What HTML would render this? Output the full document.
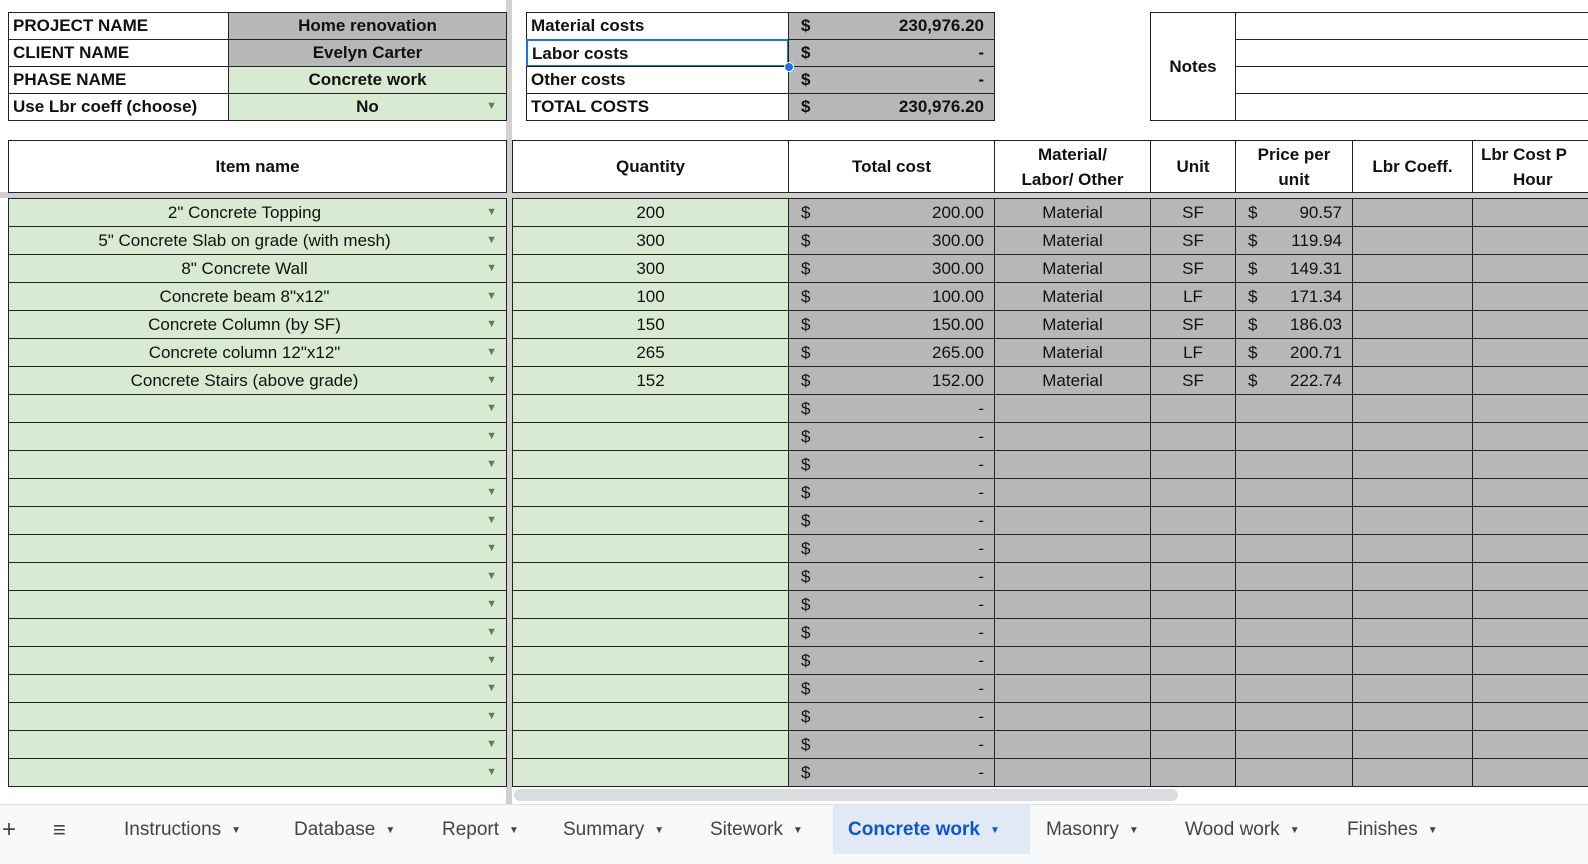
<!DOCTYPE html>
<html><head><meta charset="utf-8"><style>
*{box-sizing:border-box;margin:0;padding:0}
body{width:1588px;height:864px;overflow:hidden;background:#fff;font-family:"Liberation Sans",sans-serif;font-size:17px;color:#111;position:relative}
.c{position:absolute;border:1px solid #222;white-space:nowrap;overflow:hidden;line-height:25px}
.g{background:#d9ead3}.k{background:#b7b7b7}
.b{font-weight:bold}
.ctr{text-align:center}
.r{position:absolute;left:0;width:1588px;height:28px}
.r .c{top:0;height:29px;line-height:27px}
.a{left:8px;width:499px;text-align:center;padding-right:26px}
.q{left:512px;width:277px;text-align:center}
.t{left:788px;width:207px;text-align:right;padding-right:10px}
.m{left:994px;width:157px;text-align:center}
.u{left:1150px;width:86px;text-align:center}
.p{left:1235px;width:118px;text-align:right;padding-right:10px}
.lc{left:1352px;width:121px}
.lh{left:1472px;width:130px}
.d{position:absolute;left:12px}
.dd{position:absolute;right:9px;top:0;color:#5f7f55;font-size:11px}
.tab{position:absolute;top:804px;height:50px;line-height:52px;font-size:19px;color:#444}
.ar{font-size:10px;margin-left:10px;vertical-align:2px}
</style></head><body>
<div style="position:absolute;left:506px;top:0;width:6px;height:804px;background:#d0d0d0"></div>
<div style="position:absolute;left:0;top:192px;width:1588px;height:6px;background:#d0d0d0"></div>
<div class="c b" style="left:8px;top:12px;width:221px;height:28px;padding-left:4px">PROJECT NAME</div>
<div class="c b k ctr" style="left:228px;top:12px;width:279px;height:28px">Home renovation</div>
<div class="c b" style="left:8px;top:39px;width:221px;height:28px;padding-left:4px">CLIENT NAME</div>
<div class="c b k ctr" style="left:228px;top:39px;width:279px;height:28px">Evelyn Carter</div>
<div class="c b" style="left:8px;top:66px;width:221px;height:28px;padding-left:4px">PHASE NAME</div>
<div class="c b g ctr" style="left:228px;top:66px;width:279px;height:28px">Concrete work</div>
<div class="c b" style="left:8px;top:93px;width:221px;height:28px;padding-left:4px">Use Lbr coeff (choose)</div>
<div class="c b g ctr" style="left:228px;top:93px;width:279px;height:28px">No<span class="dd" style="line-height:25px">▼</span></div>
<div class="c b" style="left:526px;top:12px;width:263px;height:28px;padding-left:4px">Material costs</div>
<div class="c b k" style="left:788px;top:12px;width:207px;height:28px;text-align:right;padding-right:10px"><span class="d">$</span>230,976.20</div>
<div class="c b" style="left:526px;top:39px;width:263px;height:28px;padding-left:4px;border:2px solid #1a73e8">Labor costs</div>
<div class="c b k" style="left:788px;top:39px;width:207px;height:28px;text-align:right;padding-right:10px"><span class="d">$</span>-</div>
<div class="c b" style="left:526px;top:66px;width:263px;height:28px;padding-left:4px">Other costs</div>
<div class="c b k" style="left:788px;top:66px;width:207px;height:28px;text-align:right;padding-right:10px"><span class="d">$</span>-</div>
<div class="c b" style="left:526px;top:93px;width:263px;height:28px;padding-left:4px">TOTAL COSTS</div>
<div class="c b k" style="left:788px;top:93px;width:207px;height:28px;text-align:right;padding-right:10px"><span class="d">$</span>230,976.20</div>
<div style="position:absolute;left:784px;top:62px;width:10px;height:10px;border-radius:50%;background:#1a73e8;border:1px solid #fff"></div>
<div class="c b ctr" style="left:1150px;top:12px;width:86px;height:109px;line-height:107px">Notes</div>
<div class="c" style="left:1235px;top:12px;width:360px;height:28px"></div>
<div class="c" style="left:1235px;top:39px;width:360px;height:28px"></div>
<div class="c" style="left:1235px;top:66px;width:360px;height:28px"></div>
<div class="c" style="left:1235px;top:93px;width:360px;height:28px"></div>
<div class="c b ctr" style="left:8px;top:140px;width:499px;height:53px;line-height:51px">Item name</div>
<div class="c b ctr" style="left:512px;top:140px;width:277px;height:53px;line-height:51px">Quantity</div>
<div class="c b ctr" style="left:788px;top:140px;width:207px;height:53px;line-height:51px">Total cost</div>
<div class="c b ctr" style="left:994px;top:140px;width:157px;height:53px;line-height:25px;padding-top:1px">Material/<br>Labor/ Other</div>
<div class="c b ctr" style="left:1150px;top:140px;width:86px;height:53px;line-height:51px">Unit</div>
<div class="c b ctr" style="left:1235px;top:140px;width:118px;height:53px;line-height:25px;padding-top:1px">Price per<br>unit</div>
<div class="c b ctr" style="left:1352px;top:140px;width:121px;height:53px;line-height:51px">Lbr Coeff.</div>
<div class="c b" style="left:1472px;top:140px;width:130px;height:53px;line-height:25px;padding-top:1px;padding-left:8px">Lbr Cost P<br><span style="padding-left:32px">Hour</span></div>
<div class="r" style="top:198px"><div class="c g a">2" Concrete Topping<span class="dd">▼</span></div><div class="c g q">200</div><div class="c k t"><span class="d">$</span>200.00</div><div class="c k m">Material</div><div class="c k u">SF</div><div class="c k p"><span class="d">$</span>90.57</div><div class="c k lc"></div><div class="c k lh"></div></div>
<div class="r" style="top:226px"><div class="c g a">5" Concrete Slab on grade (with mesh)<span class="dd">▼</span></div><div class="c g q">300</div><div class="c k t"><span class="d">$</span>300.00</div><div class="c k m">Material</div><div class="c k u">SF</div><div class="c k p"><span class="d">$</span>119.94</div><div class="c k lc"></div><div class="c k lh"></div></div>
<div class="r" style="top:254px"><div class="c g a">8" Concrete Wall<span class="dd">▼</span></div><div class="c g q">300</div><div class="c k t"><span class="d">$</span>300.00</div><div class="c k m">Material</div><div class="c k u">SF</div><div class="c k p"><span class="d">$</span>149.31</div><div class="c k lc"></div><div class="c k lh"></div></div>
<div class="r" style="top:282px"><div class="c g a">Concrete beam 8"x12"<span class="dd">▼</span></div><div class="c g q">100</div><div class="c k t"><span class="d">$</span>100.00</div><div class="c k m">Material</div><div class="c k u">LF</div><div class="c k p"><span class="d">$</span>171.34</div><div class="c k lc"></div><div class="c k lh"></div></div>
<div class="r" style="top:310px"><div class="c g a">Concrete Column (by SF)<span class="dd">▼</span></div><div class="c g q">150</div><div class="c k t"><span class="d">$</span>150.00</div><div class="c k m">Material</div><div class="c k u">SF</div><div class="c k p"><span class="d">$</span>186.03</div><div class="c k lc"></div><div class="c k lh"></div></div>
<div class="r" style="top:338px"><div class="c g a">Concrete column 12"x12"<span class="dd">▼</span></div><div class="c g q">265</div><div class="c k t"><span class="d">$</span>265.00</div><div class="c k m">Material</div><div class="c k u">LF</div><div class="c k p"><span class="d">$</span>200.71</div><div class="c k lc"></div><div class="c k lh"></div></div>
<div class="r" style="top:366px"><div class="c g a">Concrete Stairs (above grade)<span class="dd">▼</span></div><div class="c g q">152</div><div class="c k t"><span class="d">$</span>152.00</div><div class="c k m">Material</div><div class="c k u">SF</div><div class="c k p"><span class="d">$</span>222.74</div><div class="c k lc"></div><div class="c k lh"></div></div>
<div class="r" style="top:394px"><div class="c g a"><span class="dd">▼</span></div><div class="c g q"></div><div class="c k t"><span class="d">$</span>-</div><div class="c k m"></div><div class="c k u"></div><div class="c k p"></div><div class="c k lc"></div><div class="c k lh"></div></div>
<div class="r" style="top:422px"><div class="c g a"><span class="dd">▼</span></div><div class="c g q"></div><div class="c k t"><span class="d">$</span>-</div><div class="c k m"></div><div class="c k u"></div><div class="c k p"></div><div class="c k lc"></div><div class="c k lh"></div></div>
<div class="r" style="top:450px"><div class="c g a"><span class="dd">▼</span></div><div class="c g q"></div><div class="c k t"><span class="d">$</span>-</div><div class="c k m"></div><div class="c k u"></div><div class="c k p"></div><div class="c k lc"></div><div class="c k lh"></div></div>
<div class="r" style="top:478px"><div class="c g a"><span class="dd">▼</span></div><div class="c g q"></div><div class="c k t"><span class="d">$</span>-</div><div class="c k m"></div><div class="c k u"></div><div class="c k p"></div><div class="c k lc"></div><div class="c k lh"></div></div>
<div class="r" style="top:506px"><div class="c g a"><span class="dd">▼</span></div><div class="c g q"></div><div class="c k t"><span class="d">$</span>-</div><div class="c k m"></div><div class="c k u"></div><div class="c k p"></div><div class="c k lc"></div><div class="c k lh"></div></div>
<div class="r" style="top:534px"><div class="c g a"><span class="dd">▼</span></div><div class="c g q"></div><div class="c k t"><span class="d">$</span>-</div><div class="c k m"></div><div class="c k u"></div><div class="c k p"></div><div class="c k lc"></div><div class="c k lh"></div></div>
<div class="r" style="top:562px"><div class="c g a"><span class="dd">▼</span></div><div class="c g q"></div><div class="c k t"><span class="d">$</span>-</div><div class="c k m"></div><div class="c k u"></div><div class="c k p"></div><div class="c k lc"></div><div class="c k lh"></div></div>
<div class="r" style="top:590px"><div class="c g a"><span class="dd">▼</span></div><div class="c g q"></div><div class="c k t"><span class="d">$</span>-</div><div class="c k m"></div><div class="c k u"></div><div class="c k p"></div><div class="c k lc"></div><div class="c k lh"></div></div>
<div class="r" style="top:618px"><div class="c g a"><span class="dd">▼</span></div><div class="c g q"></div><div class="c k t"><span class="d">$</span>-</div><div class="c k m"></div><div class="c k u"></div><div class="c k p"></div><div class="c k lc"></div><div class="c k lh"></div></div>
<div class="r" style="top:646px"><div class="c g a"><span class="dd">▼</span></div><div class="c g q"></div><div class="c k t"><span class="d">$</span>-</div><div class="c k m"></div><div class="c k u"></div><div class="c k p"></div><div class="c k lc"></div><div class="c k lh"></div></div>
<div class="r" style="top:674px"><div class="c g a"><span class="dd">▼</span></div><div class="c g q"></div><div class="c k t"><span class="d">$</span>-</div><div class="c k m"></div><div class="c k u"></div><div class="c k p"></div><div class="c k lc"></div><div class="c k lh"></div></div>
<div class="r" style="top:702px"><div class="c g a"><span class="dd">▼</span></div><div class="c g q"></div><div class="c k t"><span class="d">$</span>-</div><div class="c k m"></div><div class="c k u"></div><div class="c k p"></div><div class="c k lc"></div><div class="c k lh"></div></div>
<div class="r" style="top:730px"><div class="c g a"><span class="dd">▼</span></div><div class="c g q"></div><div class="c k t"><span class="d">$</span>-</div><div class="c k m"></div><div class="c k u"></div><div class="c k p"></div><div class="c k lc"></div><div class="c k lh"></div></div>
<div class="r" style="top:758px"><div class="c g a"><span class="dd">▼</span></div><div class="c g q"></div><div class="c k t"><span class="d">$</span>-</div><div class="c k m"></div><div class="c k u"></div><div class="c k p"></div><div class="c k lc"></div><div class="c k lh"></div></div>
<div style="position:absolute;left:0;top:787px;width:1588px;height:17px;background:#fff"></div>
<div style="position:absolute;left:506px;top:787px;width:6px;height:17px;background:#d0d0d0"></div>
<div style="position:absolute;left:514px;top:789px;width:664px;height:12px;border-radius:6px;background:#dadce0"></div>
<div style="position:absolute;left:0;top:804px;width:1588px;height:60px;background:#f8f9fa;border-top:1px solid #e0e0e0"></div>
<div style="position:absolute;left:833px;top:805px;width:197px;height:49px;background:#e1e9f7"></div>
<div class="tab" style="left:2px;font-size:24px">+</div>
<div class="tab" style="left:53px;font-size:22px">≡</div>
<div class="tab" style="left:124px">Instructions<span class="ar">▼</span></div>
<div class="tab" style="left:294px">Database<span class="ar">▼</span></div>
<div class="tab" style="left:442px">Report<span class="ar">▼</span></div>
<div class="tab" style="left:563px">Summary<span class="ar">▼</span></div>
<div class="tab" style="left:710px">Sitework<span class="ar">▼</span></div>
<div class="tab" style="left:848px;color:#0b57d0;font-weight:bold">Concrete work<span class="ar">▼</span></div>
<div class="tab" style="left:1046px">Masonry<span class="ar">▼</span></div>
<div class="tab" style="left:1185px">Wood work<span class="ar">▼</span></div>
<div class="tab" style="left:1347px">Finishes<span class="ar">▼</span></div>
</body></html>
